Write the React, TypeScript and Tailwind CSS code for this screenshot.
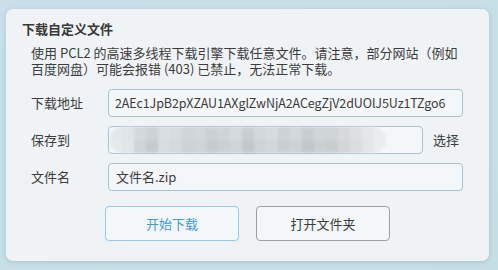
import React from "react";

const font = { fontFamily: '"Noto Sans CJK SC", "Noto Sans", sans-serif' };

function Mosaic() {
  const cols = [
    "#e4e8eb", "#dfe4e7", "#d3d8dc", "#cdd2d6", "#d9dee1", "#d6dbde", "#d0d5d9", "#d2d7da",
    "#cbd0d4", "#cfd4d8", "#d4d9dc", "#c9ced2", "#d2d7db", "#d6dbde", "#cdd2d6", "#d3d8db",
    "#c8cdd1", "#d0d5d8", "#cfd4d7", "#d6dadd", "#dce0e3", "#e3e7e9", "#e9edef",
  ];
  const cols2 = [
    "#e6eaec", "#e0e5e8", "#cfd4d8", "#c6cbcf", "#d7dce0", "#d4d9dd", "#cdd2d6", "#cfd4d8",
    "#c7ccd0", "#cbd0d4", "#d0d5d9", "#c3c8cc", "#ced3d7", "#d2d7da", "#c9ced2", "#cdd2d5",
    "#c2c7cb", "#cbd0d3", "#c8cdd0", "#d2d6d9", "#d9dde0", "#e2e6e8", "#e9edef",
  ];
  return (
    <div className="absolute left-[2px] top-[1px] flex flex-col overflow-hidden rounded-l-[12px] rounded-r-[14px] blur-[1px]">
      <div className="flex">
        {cols.map((c, i) => (
          <div key={i} className="h-[13px] w-[12px]" style={{ background: c }} />
        ))}
      </div>
      <div className="flex">
        {cols2.map((c, i) => (
          <div key={i} className="h-[13px] w-[12px]" style={{ background: c }} />
        ))}
      </div>
    </div>
  );
}

export default function App() {
  return (
    <div
      className="h-[270px] w-[498px] bg-gradient-to-br from-[#cadfe9] to-[#c3dfe4] pl-[6px] pt-[9px]"
      style={font}
    >
      <div className="flex h-[252px] w-[483px] flex-col rounded-[7px] bg-[#eff3f6] shadow-[0_1px_4px_rgba(80,110,130,0.25)]">
        <div className="pl-[16px] pt-[11px] text-[13px] font-bold leading-[18px] text-[#383838]">
          下载自定义文件
        </div>
        <div className="mt-[7px] pl-[25px] text-[13px] leading-[16px] text-[#3c3c3c]">
          <div>使用 PCL2 的高速多线程下载引擎下载任意文件。请注意，部分网站（例如</div>
          <div>百度网盘）可能会报错 (403) 已禁止，无法正常下载。</div>
        </div>
        <div className="mt-[12px] flex flex-col gap-[9px] pl-[25px] text-[13px] text-[#3c3c3c]">
          <div className="flex h-[28px] items-center">
            <div className="w-[77px]">下载地址</div>
            <div className="flex h-[28px] w-[355px] items-center overflow-hidden whitespace-nowrap rounded-[4px] border border-[#a9c2d2] bg-[#f3f7fa] pl-[6px] text-[12.5px] tracking-[-0.1px]">
              2AEc1JpB2pXZAU1AXglZwNjA2ACegZjV2dUOlJ5Uz1TZgo6
            </div>
          </div>
          <div className="flex h-[28px] items-center">
            <div className="w-[77px]">保存到</div>
            <div className="relative h-[28px] w-[315px]">
              <div className="h-[28px] w-[315px] rounded-[4px] border border-[#a9c2d2] bg-[#f3f7fa]" />
              <Mosaic />
            </div>
            <div className="ml-[10px]">选择</div>
          </div>
          <div className="flex h-[28px] items-center">
            <div className="w-[77px]">文件名</div>
            <div className="flex h-[28px] w-[355px] items-center rounded-[4px] border border-[#a9c2d2] bg-[#f3f7fa] pl-[7px]">
              文件名.zip
            </div>
          </div>
        </div>
        <div className="mt-[15px] flex justify-center gap-[17px] text-[13px]">
          <div className="flex h-[35px] w-[134px] items-center justify-center rounded-[4px] border border-[#92cbea] bg-[#f3f7fa] text-[#3f9bd6]">
            开始下载
          </div>
          <div className="flex h-[35px] w-[134px] items-center justify-center rounded-[4px] border border-[#9aa0a4] bg-[#f3f7fa] text-[#3c3c3c]">
            打开文件夹
          </div>
        </div>
      </div>
    </div>
  );
}
